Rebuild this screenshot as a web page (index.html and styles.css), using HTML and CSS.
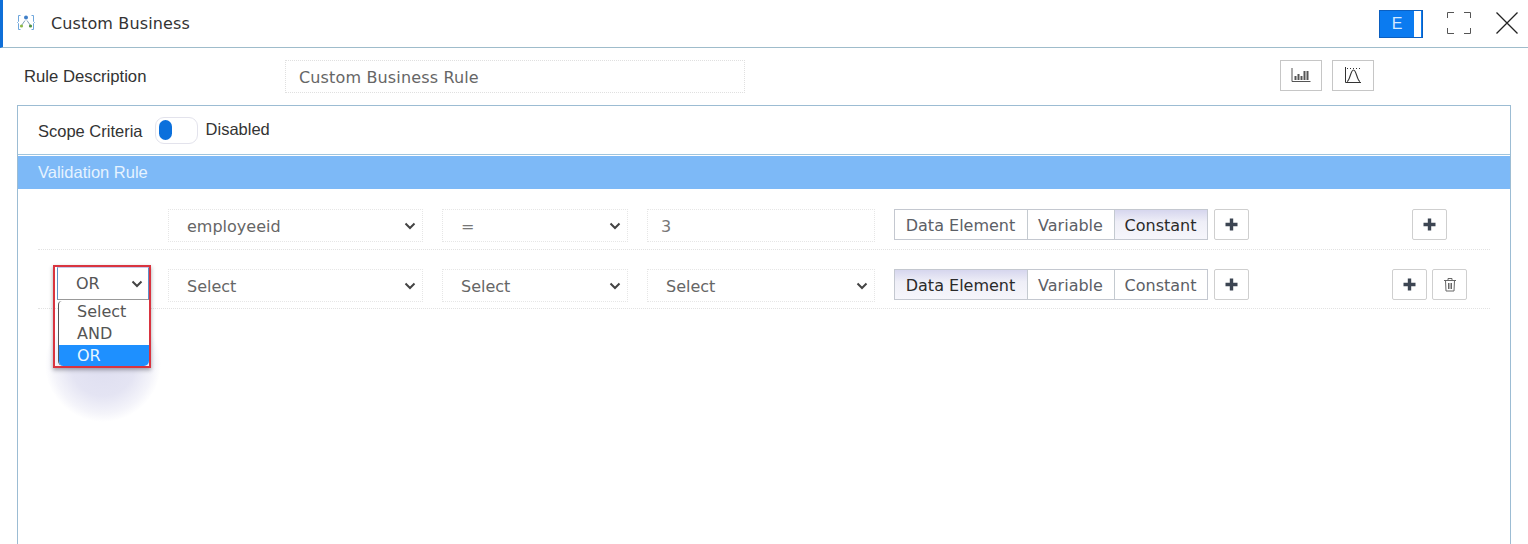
FILE: index.html
```html
<!DOCTYPE html>
<html lang="en">
<head>
<meta charset="utf-8">
<title>Custom Business</title>
<link rel="stylesheet" href="styles.css">
</head>
<body>
<div class="app">
  <header class="header">
    <svg class="logo" width="18" height="15" viewBox="0 0 18 15" fill="none">
      <path d="M3.500 .5H1.500V6.500L.5 7.500L1.500 8.500V14.500H3.500" stroke="#6ea6dc"/>
      <path d="M14.500 .5H16.500V6.500L17.500 7.500L16.500 8.500V14.500H14.500" stroke="#6ea6dc"/>
      <circle cx="9" cy="2.500" r="2" fill="#3f7fc8"/>
      <path d="M8 5.500L4.500 10.500M10 5.500L13.500 10.500" stroke="#7fa0b8"/>
      <circle cx="4.500" cy="11" r="1.600" fill="#8db84a"/>
      <circle cx="13.500" cy="11" r="1.600" fill="#4f8f3f"/>
    </svg>
    <span class="title">Custom Business</span>
    <div class="header-tools">
      <div class="edit-toggle"><span class="edit-on">E</span></div>
      <svg class="expand" width="24" height="22" viewBox="0 0 24 22" fill="none" stroke="#555">
        <path d="M.5 6V.5H7M17 .5H23.500V6M.5 16V21.500H7M17 21.500H23.500V16"/>
      </svg>
      <svg class="close" width="24" height="24" viewBox="0 0 24 24" fill="none" stroke="#222" stroke-width="1.300">
        <path d="M1.500 1.500L22.500 22.500M22.500 1.500L1.500 22.500"/>
      </svg>
    </div>
  </header>

  <div class="desc-row">
    <label class="desc-label">Rule Description</label>
    <div class="desc-input">Custom Business Rule</div>
    <div class="desc-tools">
      <button class="tool-btn">
        <svg width="20" height="16" viewBox="0 0 20 16" fill="none">
          <path d="M1 1V14.500H19.500" stroke="#555"/>
          <path d="M4.500 9V13M7.500 7V13M10.500 9V13M13.500 4V13M16.500 4V13" stroke="#555" stroke-width="2"/>
        </svg>
      </button>
      <button class="tool-btn">
        <svg width="18" height="18" viewBox="0 0 18 18" fill="none" stroke="#333">
          <path d="M1.500 1V16.500H17"/>
          <path d="M3 15.500C6 15 6.500 4 9.500 4S13 15 16 15.500" stroke-width="1.200"/>
          <path d="M3 2.500H16" stroke-dasharray="1 2"/>
        </svg>
      </button>
    </div>
  </div>

  <section class="panel">
    <div class="scope-row">
      <span class="scope-label">Scope Criteria</span>
      <div class="switch"><span class="switch-knob"></span></div>
      <span class="scope-state">Disabled</span>
    </div>
    <div class="panel-bar">Validation Rule</div>

    <div class="rule rule-first">
      <div class="rule-lead"></div>
      <div class="field w-attr"><span>employeeid</span><svg class="chev" width="12" height="8" viewBox="0 0 12 8" fill="none"><path d="M1.500 1.500L6 6L10.500 1.500"/></svg></div>
      <div class="field w-op"><span class="op">=</span><svg class="chev" width="12" height="8" viewBox="0 0 12 8" fill="none"><path d="M1.500 1.500L6 6L10.500 1.500"/></svg></div>
      <div class="field w-val"><span class="const">3</span></div>
      <div class="segment">
        <span class="seg seg-a">Data Element</span><span class="seg seg-b">Variable</span><span class="seg seg-c seg-active">Constant</span>
      </div>
      <button class="icon-btn plus-inline"><svg class="plus" width="13" height="13" viewBox="0 0 13 13"><path d="M6.500 .5V12.500M.5 6.500H12.500"/></svg></button>
      <div class="actions actions-first"><button class="icon-btn"><svg class="plus" width="13" height="13" viewBox="0 0 13 13"><path d="M6.500 .5V12.500M.5 6.500H12.500"/></svg></button></div>
    </div>

    <div class="rule rule-second">
      <div class="rule-lead">
        <div class="logic"><span>OR</span><svg class="chev" width="12" height="8" viewBox="0 0 12 8" fill="none"><path d="M1.500 1.500L6 6L10.500 1.500"/></svg></div>
      </div>
      <div class="field w-attr"><span>Select</span><svg class="chev" width="12" height="8" viewBox="0 0 12 8" fill="none"><path d="M1.500 1.500L6 6L10.500 1.500"/></svg></div>
      <div class="field w-op"><span>Select</span><svg class="chev" width="12" height="8" viewBox="0 0 12 8" fill="none"><path d="M1.500 1.500L6 6L10.500 1.500"/></svg></div>
      <div class="field w-val"><span>Select</span><svg class="chev" width="12" height="8" viewBox="0 0 12 8" fill="none"><path d="M1.500 1.500L6 6L10.500 1.500"/></svg></div>
      <div class="segment">
        <span class="seg seg-a seg-active">Data Element</span><span class="seg seg-b">Variable</span><span class="seg seg-c">Constant</span>
      </div>
      <button class="icon-btn plus-inline"><svg class="plus" width="13" height="13" viewBox="0 0 13 13"><path d="M6.500 .5V12.500M.5 6.500H12.500"/></svg></button>
      <div class="actions actions-second">
        <button class="icon-btn"><svg class="plus" width="13" height="13" viewBox="0 0 13 13"><path d="M6.500 .5V12.500M.5 6.500H12.500"/></svg></button>
        <button class="icon-btn">
          <svg width="14" height="15" viewBox="0 0 14 15" fill="none" stroke="#666">
            <path d="M1 3.500H13M5 3V1.500H9V3M2.500 3.500L3 14H11L11.500 3.500M5.500 6V12M7 6V12M8.500 6V12"/>
          </svg>
        </button>
      </div>
    </div>
  </section>

  <div class="halo"></div>
  <div class="highlight"></div>
  <ul class="menu">
    <li>Select</li>
    <li>AND</li>
    <li class="menu-active">OR</li>
  </ul>
</div>
</body>
</html>
```

FILE: styles.css
```css
* { box-sizing: border-box; }
html, body { margin: 0; height: 100%; overflow: hidden; background: #fff; }
.app {
  position: relative;
  width: 1528px;
  height: 544px;
  overflow: hidden;
  font-family: "Liberation Sans", Arial, sans-serif;
  color: #333;
}
button { font: inherit; padding: 0; background: #fff; cursor: pointer; }

.header {
  display: flex;
  align-items: center;
  height: 48px;
  padding-left: 14px;
  border-bottom: 1px solid #9fbccb;
  border-left: 3px solid #0f6fd8;
}
.logo { margin-right: 16px; margin-top: -2px; }
.title {
  font-family: "DejaVu Sans", sans-serif;
  font-size: 16px;
  color: #333;
  letter-spacing: .13px;
}
.header-tools { margin-left: auto; display: flex; align-items: center; }
.edit-toggle {
  width: 44px;
  height: 28px;
  border: 1px solid #0b5fc0;
  margin-right: 24px;
  background-image: linear-gradient(to right, #0b7bf0 34px, #fff 34px, #fff 41px, #0b7bf0 41px);
}
.edit-on {
  display: block;
  width: 34px;
  line-height: 26px;
  text-align: center;
  color: #d5eaff;
  font-size: 16px;
}
.expand { margin-right: 24px; margin-top: -2px; }
.close { margin-right: 9px; margin-top: -2px; }

.desc-row {
  display: flex;
  align-items: center;
  height: 33px;
  margin-top: 12px;
  padding-left: 24px;
}
.desc-label { width: 261px; font-size: 16.700px; color: #333; }
.desc-input {
  width: 460px;
  height: 33px;
  padding-left: 13px;
  border: 1px dotted #e0e0e0;
  font-family: "DejaVu Sans", sans-serif;
  font-size: 16px;
  letter-spacing: .15px;
  line-height: 33px;
  color: #666;
}
.desc-tools { margin-left: 535px; display: flex; gap: 10px; margin-top: -3px; }
.tool-btn {
  width: 42px;
  height: 31px;
  border: 1px solid #c6c6c6;
  display: flex;
  align-items: center;
  justify-content: center;
}

.panel {
  margin: 12px 17px 0;
  height: 460px;
  border: 1px solid #9cbcd3;
}
.scope-row {
  display: flex;
  align-items: center;
  height: 49px;
  padding-left: 20px;
  font-size: 16.500px;
  color: #333;
  border-bottom: 1px solid #9fc5de;
}
.scope-label { margin-right: 12px; margin-top: 3px; }
.switch {
  width: 43px;
  height: 27px;
  border: 1px solid #e3e3ec;
  border-radius: 9px;
  padding: 2px 3px;
  margin-right: 8px;
}
.switch-knob {
  display: block;
  width: 13px;
  height: 20px;
  border-radius: 7px;
  background: #0b70dc;
}
.scope-state { margin-top: -2px; }
.panel-bar {
  margin-top: 1px;
  height: 33px;
  padding-left: 20px;
  background: #7db9f7;
  color: #e6f3ff;
  font-size: 16.500px;
  line-height: 32px;
}

.rule {
  display: flex;
  align-items: flex-start;
  margin: 0 20px;
  border-bottom: 1px dotted #e2e2e2;
}
.rule-first { margin-top: 20px; height: 41px; }
.rule-second { margin-top: 19px; height: 40px; }
.rule-lead { width: 130px; flex: none; }
.field {
  flex: none;
  display: flex;
  align-items: center;
  justify-content: space-between;
  height: 33px;
  padding: 0 6px 0 18px;
  border: 1px dotted #e6e6e6;
  font-family: "DejaVu Sans", sans-serif;
  font-size: 16px;
  color: #666;
  margin-right: 19px;
}
.field span { position: relative; top: 1px; }
.w-attr { width: 255px; }
.w-op { width: 186px; }
.w-val { width: 228px; }
.const { margin-left: -5px; color: #777; }
.op { color: #777; }
.chev { stroke: #444; stroke-width: 2; flex: none; }
.segment {
  flex: none;
  display: flex;
  width: 314px;
  height: 31px;
  border: 1px solid #c4c8d0;
  font-family: "DejaVu Sans", sans-serif;
  font-size: 16px;
  color: #5c6066;
}
.seg { display: flex; align-items: center; justify-content: center; padding-top: 1px; padding-right: 1px; }
.seg-a { width: 132px; }
.seg-b { width: 87px; border-left: 1px solid #c4cad0; }
.seg-c { flex: 1; border-left: 1px solid #c4cad0; }
.seg-active {
  color: #2a2a2a;
  background: linear-gradient(#d6d6ee, #eeeef7 40%, #f6f6fb);
}
.icon-btn {
  width: 35px;
  height: 31px;
  border: 1px solid #cfcfcf;
  border-radius: 2px;
  display: flex;
  align-items: center;
  justify-content: center;
}
.plus { stroke: #3c4552; stroke-width: 3.400; fill: none; }
.plus-inline { margin-left: 6px; flex: none; }
.actions { margin-left: auto; display: flex; gap: 5px; }
.actions-first { margin-right: 43px; }
.actions-second { margin-right: 23px; }

.logic {
  display: flex;
  align-items: center;
  justify-content: space-between;
  width: 92px;
  height: 33px;
  margin-left: 19px;
  margin-top: -2px;
  padding: 0 5px 0 18px;
  border: 1px solid #5f90c8;
  border-top-color: #c8c8e8;
  border-bottom-color: #999;
  font-family: "DejaVu Sans", sans-serif;
  font-size: 16px;
  color: #555;
}

.halo {
  position: absolute;
  left: 45px;
  top: 306px;
  width: 116px;
  height: 116px;
  border-radius: 50%;
  background: radial-gradient(circle closest-side, #dedef0 0, #e4e4f3 55%, #f4f4fa 85%, #fff 100%);
}
.highlight {
  position: absolute;
  left: 53px;
  top: 265px;
  width: 98px;
  height: 103px;
  border: 2px solid #d9343f;
  box-shadow: 0 2px 4px rgba(60, 60, 70, .45);
}
.menu {
  position: absolute;
  left: 58px;
  top: 301px;
  width: 91px;
  height: 65px;
  margin: 0;
  padding: 0;
  list-style: none;
  background: #fff;
  border-left: 1px solid #555;
  border-radius: 4px 4px 5px 5px;
  overflow: hidden;
  font-family: "DejaVu Sans", sans-serif;
  font-size: 16px;
  color: #555;
}
.menu li { height: 22px; line-height: 21px; padding-left: 18px; }
.menu .menu-active { background: #1e90ff; color: #e8f6ff; }
```
